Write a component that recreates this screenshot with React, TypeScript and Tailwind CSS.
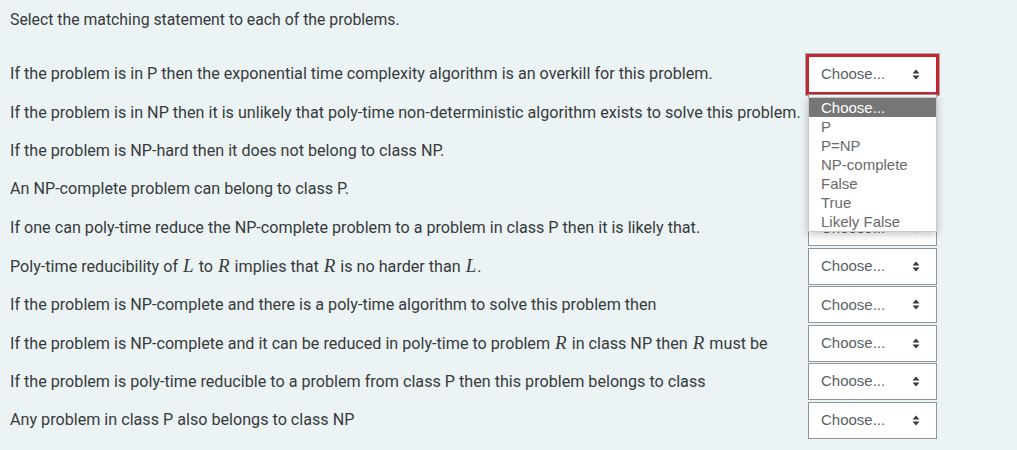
import React from "react";

type Part = string | { m: string };

const rows: Part[][] = [
  ["If the problem is in P then the exponential time complexity algorithm is an overkill for this problem."],
  ["If the problem is in NP then it is unlikely that poly-time non-deterministic algorithm exists to solve this problem."],
  ["If the problem is NP-hard then it does not belong to class NP."],
  ["An NP-complete problem can belong to class P."],
  ["If one can poly-time reduce the NP-complete problem to a problem in class P then it is likely that."],
  ["Poly-time reducibility of ", { m: "L" }, " to ", { m: "R" }, " implies that ", { m: "R" }, " is no harder than ", { m: "L" }, "."],
  ["If the problem is NP-complete and there is a poly-time algorithm to solve this problem then"],
  ["If the problem is NP-complete and it can be reduced in poly-time to problem ", { m: "R" }, " in class NP then ", { m: "R" }, " must be"],
  ["If the problem is poly-time reducible to a problem from class P then this problem belongs to class"],
  ["Any problem in class P also belongs to class NP"],
];

const options = ["Choose...", "P", "P=NP", "NP-complete", "False", "True", "Likely False"];

function Arrows() {
  return (
    <svg width="8" height="11" viewBox="0 0 8 11" className="shrink-0">
      <path d="M4 0.5 L7.5 4.5 L0.5 4.5 Z" fill="#343a40" />
      <path d="M4 10.5 L7.5 6.5 L0.5 6.5 Z" fill="#343a40" />
    </svg>
  );
}

function Select({ focused }: { focused?: boolean }) {
  return (
    <div className="relative font-['Liberation_Sans',Arial,sans-serif]">
      <div
        className={
          focused
            ? "flex h-[43px] w-[135px] -m-[3px] items-center justify-between border border-[#a9a9a9] bg-white pl-[15px] pr-[19px] shadow-[inset_0_0_0_3px_#c4262e]"
            : "flex h-[37px] w-[129px] items-center justify-between border border-[#8f959e] bg-white pl-[12px] pr-[16px]"
        }
      >
        <span className="text-[15px] text-[#5a5f66]">Choose...</span>
        <Arrows />
      </div>
      {focused && (
        <div className="absolute left-0 top-[41px] z-10 w-[129px] border border-[#c8c8c8] bg-white shadow-[0_2px_8px_rgba(0,0,0,0.25)]">
          {options.map((o, i) => (
            <div
              key={o}
              className={
                i === 0
                  ? "h-[19px] bg-[#767676] pl-[12px] text-[15px] leading-[19px] text-white"
                  : "h-[19px] pl-[12px] text-[15px] leading-[19px] text-[#6a6a6a]"
              }
            >
              {o}
            </div>
          ))}
        </div>
      )}
    </div>
  );
}

export default function App() {
  return (
    <div className="h-[450px] w-[1017px] bg-[#ebf3f5] font-['Roboto',Arial,sans-serif] text-[16.15px] text-[#373a3c]">
      <div className="pl-[10px] pt-[9px] text-[15.8px] leading-[22px]">Select the matching statement to each of the problems.</div>
      <div className="mt-[24px]">
        {rows.map((parts, i) => (
          <div key={i} className="flex h-[38.45px] items-center">
            <div className="w-[808px] whitespace-nowrap pl-[10px]">
              {parts.map((p, j) =>
                typeof p === "string" ? (
                  <span key={j}>{p}</span>
                ) : (
                  <span key={j} className="mx-[1px] font-['Liberation_Serif',serif] text-[19px] italic">
                    {p.m}
                  </span>
                )
              )}
            </div>
            <Select focused={i === 0} />
          </div>
        ))}
      </div>
    </div>
  );
}
